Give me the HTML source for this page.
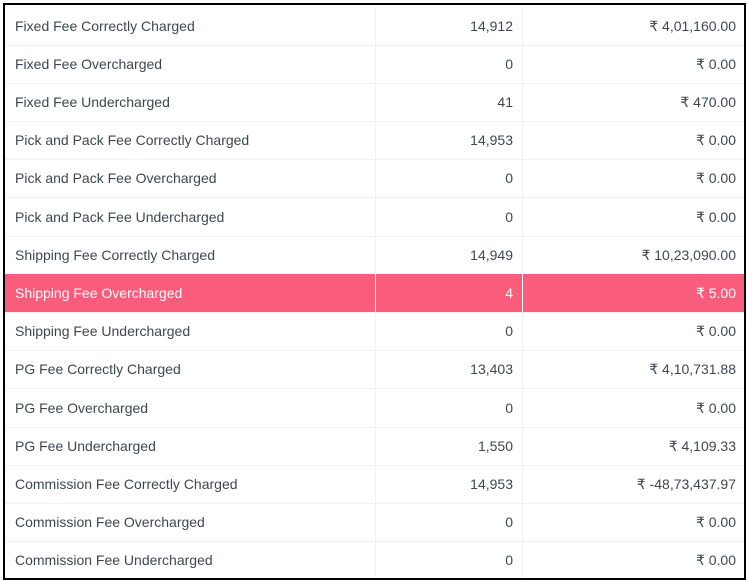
<!DOCTYPE html><html><head><style>
body{margin:0;background:#fff;width:747px;height:581px;overflow:hidden;font-family:"Liberation Sans",sans-serif;}
.box{position:absolute;left:3px;top:3px;width:739px;height:573px;border:2px solid #000;overflow:hidden;background:#fff}
.in{position:absolute;left:0;top:1.5px;width:739px;height:600px}
.r{position:absolute;left:0;width:739px;height:38px;border-bottom:1px solid #eef1f4;font-size:14px;color:#3d4752;line-height:38px}
.r div{position:absolute;top:0;height:38px}
.a{left:10px}
.b{left:370px;width:146px;text-align:right;border-left:1px solid #eef1f4;padding-right:8px;box-sizing:border-box}
.c{left:517px;width:222px;text-align:right;border-left:1px solid #eef1f4;padding-right:8px;box-sizing:border-box}
.h{background:#fa5c7c;color:#fff}
.h .b,.h .c{border-left-color:#fff}
</style></head><body><div class="box"><div class="in">
<div class="r" style="top:0"><div class="a">Fixed Fee Correctly Charged</div><div class="b">14,912</div><div class="c">₹ 4,01,160.00</div></div>
<div class="r" style="top:38.2px"><div class="a">Fixed Fee Overcharged</div><div class="b">0</div><div class="c">₹ 0.00</div></div>
<div class="r" style="top:76.4px"><div class="a">Fixed Fee Undercharged</div><div class="b">41</div><div class="c">₹ 470.00</div></div>
<div class="r" style="top:114.6px"><div class="a">Pick and Pack Fee Correctly Charged</div><div class="b">14,953</div><div class="c">₹ 0.00</div></div>
<div class="r" style="top:152.8px"><div class="a">Pick and Pack Fee Overcharged</div><div class="b">0</div><div class="c">₹ 0.00</div></div>
<div class="r" style="top:191px"><div class="a">Pick and Pack Fee Undercharged</div><div class="b">0</div><div class="c">₹ 0.00</div></div>
<div class="r" style="top:229.2px"><div class="a">Shipping Fee Correctly Charged</div><div class="b">14,949</div><div class="c">₹ 10,23,090.00</div></div>
<div class="r h" style="top:267.4px"><div class="a">Shipping Fee Overcharged</div><div class="b">4</div><div class="c">₹ 5.00</div></div>
<div class="r" style="top:305.6px"><div class="a">Shipping Fee Undercharged</div><div class="b">0</div><div class="c">₹ 0.00</div></div>
<div class="r" style="top:343.8px"><div class="a">PG Fee Correctly Charged</div><div class="b">13,403</div><div class="c">₹ 4,10,731.88</div></div>
<div class="r" style="top:382px"><div class="a">PG Fee Overcharged</div><div class="b">0</div><div class="c">₹ 0.00</div></div>
<div class="r" style="top:420.2px"><div class="a">PG Fee Undercharged</div><div class="b">1,550</div><div class="c">₹ 4,109.33</div></div>
<div class="r" style="top:458.4px"><div class="a">Commission Fee Correctly Charged</div><div class="b">14,953</div><div class="c">₹ -48,73,437.97</div></div>
<div class="r" style="top:496.6px"><div class="a">Commission Fee Overcharged</div><div class="b">0</div><div class="c">₹ 0.00</div></div>
<div class="r" style="top:534.8px"><div class="a">Commission Fee Undercharged</div><div class="b">0</div><div class="c">₹ 0.00</div></div>
</div></div></body></html>
